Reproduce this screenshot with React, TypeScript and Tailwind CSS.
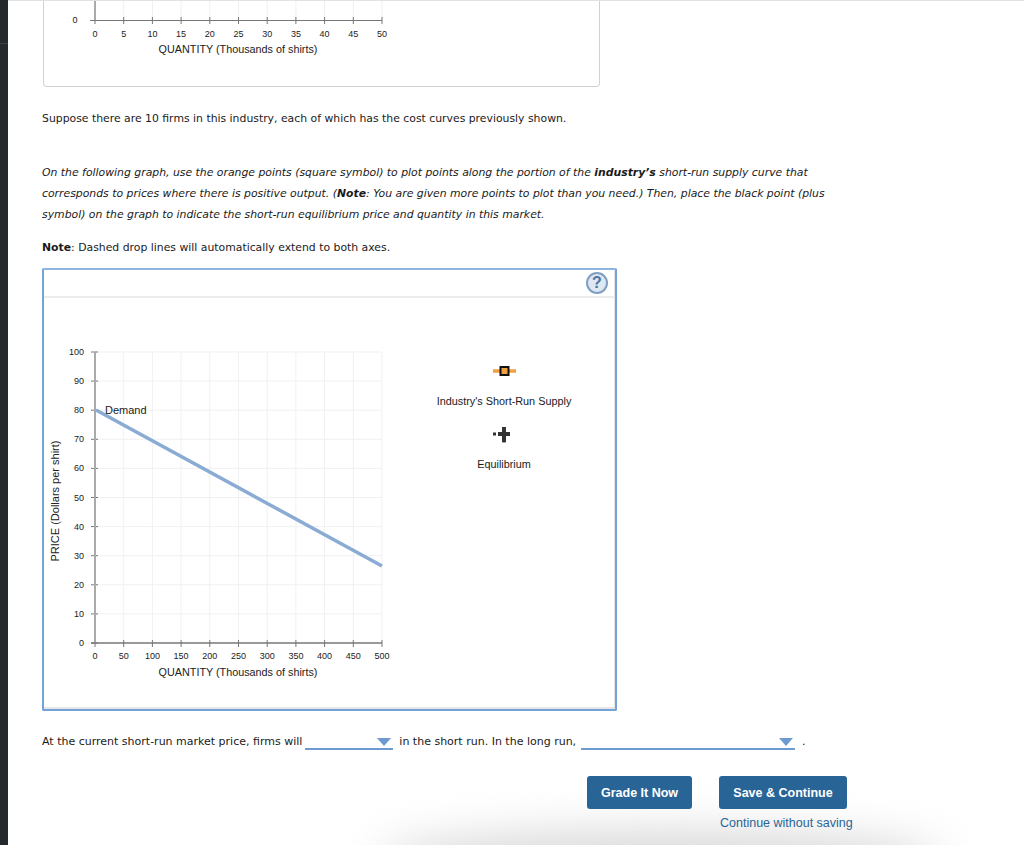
const sans = "font-['Liberation_Sans',Arial,sans-serif]";
const body = "font-['DejaVu_Sans',Verdana,sans-serif] text-[10.85px] text-[#1a1a1a]";

const range = (n: number) => Array.from({ length: n }, (_, i) => i);

function TopChart() {
  return (
    <svg width="400" height="60" className="absolute left-0 top-0 block">
      <g fontFamily="Liberation Sans, Arial, sans-serif" fontSize="9" fill="#222">
        {range(11).map((i) => {
          const x = 51 + i * 28.7;
          return (
            <g key={i}>
              {i > 0 && <line x1={x} x2={x} y1="0" y2="19" stroke="#efefef" />}
              <line x1={x} x2={x} y1="16" y2="23" stroke="#777" />
              <text x={x} y="36" textAnchor="middle">{i * 5}</text>
            </g>
          );
        })}
        <text x="31" y="22" textAnchor="middle">0</text>
        <line x1="51" x2="51" y1="0" y2="19" stroke="#aaa" strokeWidth="2" />
        <line x1="46" x2="338" y1="19.5" y2="19.5" stroke="#777" />
        <text x="194" y="52" textAnchor="middle" fontSize="10.8">QUANTITY (Thousands of shirts)</text>
      </g>
    </svg>
  );
}

function MainChart() {
  const left = 51;
  const top = 54;
  const stepX = 28.7;
  const stepY = 29.1;
  return (
    <svg width="360" height="412" className="block">
      <g fontFamily="Liberation Sans, Arial, sans-serif" fontSize="9" fill="#222">
        {range(11).map((i) => {
          const x = left + i * stepX;
          const y = top + i * stepY;
          return (
            <g key={i}>
              {i > 0 && <line x1={x} x2={x} y1={top} y2={top + 291} stroke="#f1f1f1" />}
              {i < 10 && <line x1={left} x2={left + 287} y1={y} y2={y} stroke="#f1f1f1" />}
              <line x1={x} x2={x} y1={top + 288} y2={top + 295} stroke="#777" />
              <line x1={left - 4} x2={left + 3} y1={y} y2={y} stroke="#777" />
              <text x={x} y={top + 307} textAnchor="middle">{i * 50}</text>
              <text x={40} y={y + 3} textAnchor="end">{(10 - i) * 10}</text>
            </g>
          );
        })}
        <line x1={left} x2={left} y1={top} y2={top + 291} stroke="#aaa" strokeWidth="2" />
        <line x1={left - 4} x2={left + 287} y1={top + 291} y2={top + 291} stroke="#777" strokeWidth="1.5" />
        <line x1={left + 1} x2={left + 287} y1={top + 58} y2={top + 214} stroke="#8aabd3" strokeWidth="3.5" />
        <text x={left + 10} y={top + 62} fontSize="11">Demand</text>
        <text x={left + 143} y={top + 324} textAnchor="middle" fontSize="10.8">QUANTITY (Thousands of shirts)</text>
        <text transform={`translate(15 ${top + 149}) rotate(-90)`} textAnchor="middle" fontSize="11">PRICE (Dollars per shirt)</text>
      </g>
    </svg>
  );
}

function SupplyIcon() {
  return (
    <svg width="24" height="10" className="block">
      <rect x="0" y="3.25" width="23" height="3.5" fill="#f0a040" />
      <rect x="7.5" y="1" width="8" height="8" fill="#f0a040" stroke="#111" strokeWidth="2" />
    </svg>
  );
}

function PlusIcon() {
  return (
    <svg width="18" height="16" className="block">
      <path d="M9 0h4v5h4v4h-4v6H9V9H5V5h4z" fill="#333" />
      <rect x="0" y="5.5" width="3" height="3" fill="#333" />
      <rect x="9.5" y="12.5" width="3" height="3" fill="#333" />
    </svg>
  );
}

function Dropdown({ width }: { width: string }) {
  return (
    <span className={`inline-flex ${width} h-[17px] items-start justify-end border-b-2 border-[#6d9ad0] pr-[2px] pt-[5px]`}>
      <span className="h-0 w-0 border-l-[7px] border-r-[7px] border-t-[8px] border-l-transparent border-r-transparent border-t-[#6d9ad0]" />
    </span>
  );
}

export default function App() {
  return (
    <div className="relative flex h-[845px] w-[1024px] overflow-hidden bg-white">
      <div className="w-2 shrink-0 bg-[#24292d]">
        <div className="h-[44px] border-b border-[#3a3f43]" />
      </div>
      <div className="relative flex-1 border-t border-[#e2e2e2]">
        {/* soft shadow behind the bottom edge */}
        <div className="absolute left-[370px] right-[80px] top-[830px] h-[60px] rounded-[50%] bg-[#d8d8d8] blur-[22px]" />

        <div className="relative flex flex-col pl-[34px]">
          <div className="relative ml-px h-[86px] w-[557px] rounded-b-[4px] border border-t-0 border-[#d2d2d2]">
            <TopChart />
          </div>

          <p className={`${body} mt-[23px] leading-[18px]`}>
            Suppose there are 10 firms in this industry, each of which has the cost curves previously shown.
          </p>

          <p className={`${body} mt-[34px] italic leading-[21px]`}>
            On the following graph, use the orange points (square symbol) to plot points along the portion of the <b>industry’s</b> short-run supply curve that
            <br />
            corresponds to prices where there is positive output. (<b>Note</b>: You are given more points to plot than you need.) Then, place the black point (plus
            <br />
            symbol) on the graph to indicate the short-run equilibrium price and quantity in this market.
          </p>

          <p className={`${body} mt-[11.5px] leading-[21.5px]`}>
            <b>Note</b>: Dashed drop lines will automatically extend to both axes.
          </p>

          <div className="mt-[10px] h-[443px] w-[575px] rounded-[2px] border-2 border-[#74a3d8] border-t-[#8fb6e0] shadow-[inset_-1px_-2px_0_#e6e6e6]">
            <div className="flex h-[28px] items-center justify-end border-b-2 border-[#ececec] pr-[7px]">
              <div className={`${sans} flex h-[22px] w-[22px] items-center justify-center rounded-full border-2 border-[#7f9fc2] bg-[#dfe8f2] text-[16px] font-bold text-[#4a75a3]`}>
                ?
              </div>
            </div>
            <div className="flex">
              <MainChart />
              <div className={`${sans} ml-[32px] flex w-[136px] flex-col items-center pt-[68px] text-[10.85px] text-[#1c1c1c]`}>
                <div className="ml-[2px]"><SupplyIcon /></div>
                <div className="mt-[18px] whitespace-nowrap leading-[14px]">Industry's Short-Run Supply</div>
                <div className="-ml-[5px] mt-[19px]"><PlusIcon /></div>
                <div className="mt-[14px] leading-[14px]">Equilibrium</div>
              </div>
            </div>
          </div>

          <div className="mt-[21px] flex h-[20px] items-center whitespace-pre font-['DejaVu_Sans',Verdana,sans-serif] text-[11px] text-[#1a1a1a]">
            <span>At the current short-run market price, firms will</span>
            <span className="ml-[3px]"><Dropdown width="w-[88px]" /></span>
            <span className="ml-[6px]">in the short run. In the long run,</span>
            <span className="ml-[5px]"><Dropdown width="w-[214px]" /></span>
            <span className="ml-[7px]">.</span>
          </div>

          <div className={`${sans} mt-[24px] flex justify-start pl-[545px]`}>
            <button className="h-[33px] w-[105px] rounded-[3px] bg-[#286496] pt-px text-[12.5px] font-bold text-white">Grade It Now</button>
            <div className="ml-[27px] flex flex-col">
              <button className="h-[33px] w-[128px] rounded-[3px] bg-[#286496] pt-px text-[12.5px] font-bold text-white">Save &amp; Continue</button>
              <a className="ml-px mt-[7px] whitespace-nowrap text-[12.5px] leading-[15px] text-[#2a6496]">Continue without saving</a>
            </div>
          </div>
        </div>
      </div>
    </div>
  );
}
